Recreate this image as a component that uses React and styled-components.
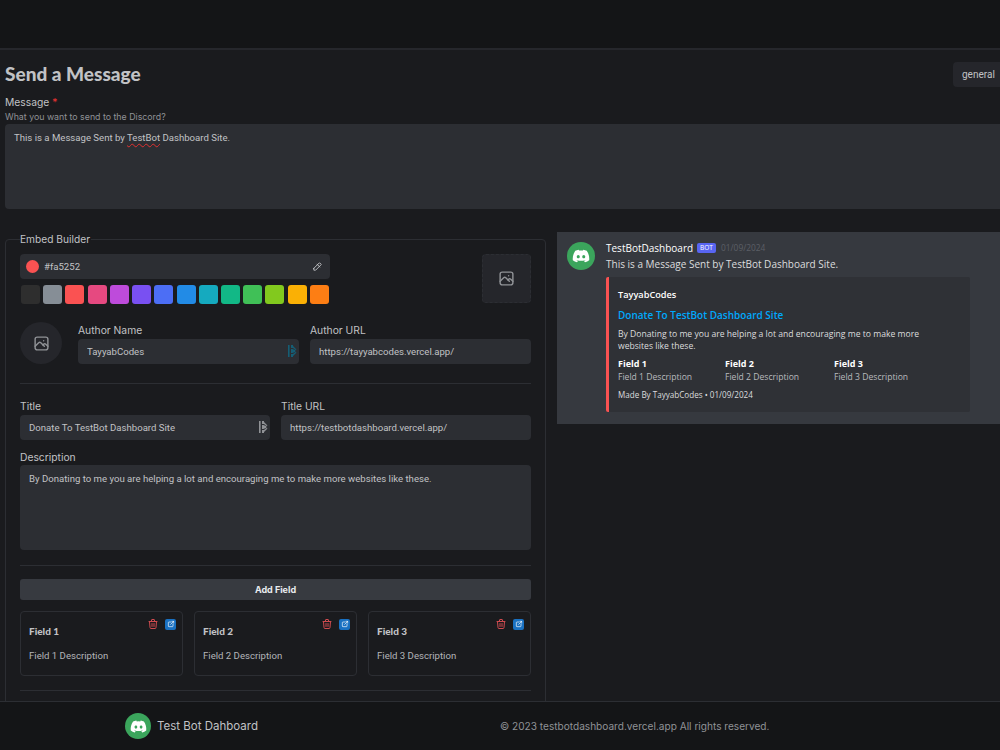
import React from 'react'
import styled, { createGlobalStyle } from 'styled-components'
import { FaDiscord } from 'react-icons/fa'
import { TbColorPicker, TbPhoto, TbTrash, TbExternalLink } from 'react-icons/tb'

const GlobalStyle = createGlobalStyle`
  html, body { margin: 0; padding: 0; background: #1a1b1e; }
  * { box-sizing: border-box; }
  body { font-family: "Roboto", sans-serif; color: #c1c2c5; }
`

const Shell = styled.div`
  height: 750px;
  display: flex;
  flex-direction: column;
  overflow: hidden;
`

const Header = styled.header`
  flex: 0 0 50px;
  background: #141517;
  border-bottom: 2px solid #26272c;
`

const Main = styled.main`
  flex: 1;
  min-height: 0;
  overflow: hidden;
  padding: 10px 0 0 5px;
`

const TitleRow = styled.div`
  display: flex;
  justify-content: space-between;
  align-items: center;
  height: 28px;
`

const PageTitle = styled.h1`
  margin: 0;
  font-family: "Lato", sans-serif;
  font-size: 19px;
  line-height: 28px;
  font-weight: 900;
  color: #c1c2c5;
`

const ChannelButton = styled.div`
  width: 47px;
  height: 25px;
  line-height: 25px;
  padding-left: 9px;
  background: #25262b;
  border-radius: 4px 0 0 4px;
  font-size: 10px;
  color: #c1c2c5;
  white-space: nowrap;
`

const Label = styled.label`
  display: block;
  font-family: "Inter", sans-serif;
  font-size: 10.3px;
  font-weight: 400;
  line-height: 16px;
  color: #c1c2c5;
`

const MessageLabel = styled(Label)`
  margin-top: 6px;
`

const Required = styled.span`
  color: #e03131;
`

const Hint = styled.div`
  margin-top: 1px;
  font-family: "Inter", sans-serif;
  font-size: 8.8px;
  line-height: 11px;
  color: #909296;
`

const MessageBox = styled.div`
  height: 85px;
  margin-top: 2px;
  padding: 6px 9px;
  background: #2c2e33;
  border-radius: 4px 0 0 4px;
  font-size: 9.6px;
  line-height: 15px;
  color: #c1c2c5;
`

const Misspelled = styled.span`
  text-decoration: underline wavy #e03131 1px;
  text-underline-offset: 2px;
`

const Columns = styled.div`
  display: grid;
  grid-template-columns: 541px 443px;
  gap: 11px;
  margin-top: 23px;
  align-items: start;
`

const Fieldset = styled.fieldset`
  margin: 0;
  padding: 8px 14px 14px;
  min-width: 0;
  border: 1px solid #2c2e33;
  border-radius: 4px;
`

const Legend = styled.legend`
  padding: 0 1px 0 0;
  font-family: "Inter", sans-serif;
  font-size: 10.2px;
  font-weight: 400;
  line-height: 14px;
  color: #c1c2c5;
`

const ColorRow = styled.div`
  display: flex;
  justify-content: space-between;
  align-items: flex-start;
`

const ColorInput = styled.div`
  width: 310px;
  height: 25px;
  display: flex;
  align-items: center;
  gap: 5px;
  padding: 0 7px 0 6px;
  background: #2c2e33;
  border-radius: 4px;
  font-size: 9.6px;
`

const ColorDot = styled.span`
  flex: none;
  width: 13px;
  height: 13px;
  border-radius: 50%;
  background: ${p => p.$color};
`

const ColorValue = styled.span`
  flex: 1;
`

const Swatches = styled.div`
  display: flex;
  gap: 3.23px;
  margin: 6px 0 0 1px;
`

const Swatch = styled.span`
  width: 19px;
  height: 19px;
  border-radius: 3px;
  background: ${p => p.$color};
`

const ImageBox = styled.div`
  width: 49px;
  height: 49px;
  display: flex;
  align-items: center;
  justify-content: center;
  background: #25262b;
  border: 1px dashed #2c2e33;
  border-radius: 4px;
  color: #909296;
`

const AuthorRow = styled.div`
  display: flex;
  gap: 16px;
  margin-top: 18px;
  align-items: flex-end;
`

const AuthorCircle = styled(ImageBox)`
  flex: none;
  width: 42px;
  height: 42px;
  border: none;
  border-radius: 50%;
`

const TwoFields = styled.div`
  flex: 1;
  display: grid;
  grid-template-columns: 1fr 1fr;
  column-gap: 11px;
`

const Field = styled.div`
  min-width: 0;
`

const InputWrap = styled.div`
  position: relative;
  height: 25px;
  margin-top: 1px;
`

const Input = styled.input`
  width: 100%;
  height: 100%;
  padding: 0 9px;
  border: none;
  outline: none;
  background: #2c2e33;
  border-radius: 4px;
  font-family: "Roboto", sans-serif;
  font-size: 9.6px;
  color: #c1c2c5;
`

const GrammarMark = styled.svg`
  position: absolute;
  right: 2px;
  top: 6px;
  color: ${p => p.$color};
`

const Divider = styled.hr`
  margin: ${p => p.$margin || '14px 0'};
  border: none;
  border-top: 1px solid #2c2e33;
`

const DescriptionField = styled.div`
  margin-top: 9px;
`

const DescriptionArea = styled.textarea`
  display: block;
  width: 100%;
  height: 85px;
  padding: 6px 9px;
  border: none;
  outline: none;
  resize: none;
  background: #2c2e33;
  border-radius: 4px;
  font-family: "Roboto", sans-serif;
  font-size: 9.6px;
  line-height: 15px;
  color: #c1c2c5;
`

const AddButton = styled.button`
  display: block;
  width: 100%;
  height: 21px;
  padding: 0;
  border: none;
  background: #373a40;
  border-radius: 3px;
  font-family: "Inter", sans-serif;
  font-size: 9px;
  font-weight: 700;
  color: #e9ecef;
`

const FieldCards = styled.div`
  display: grid;
  grid-template-columns: repeat(3, 1fr);
  gap: 11px;
  margin-top: 11px;
`

const FieldCard = styled.div`
  position: relative;
  height: 65px;
  padding: 12px 8px;
  border: 1px solid #2c2e33;
  border-radius: 4px;
`

const FieldName = styled.div`
  font-family: "Lato", sans-serif;
  font-size: 10px;
  font-weight: 900;
  line-height: 14px;
  color: #c1c2c5;
`

const FieldDescription = styled.div`
  margin-top: 11px;
  font-size: 9.6px;
  line-height: 14px;
  color: #b4b5b9;
`

const CardActions = styled.div`
  position: absolute;
  top: 6px;
  right: 6px;
  display: flex;
  align-items: center;
  gap: 6px;
  color: #cf4b4f;
`

const MoveButton = styled.span`
  width: 11px;
  height: 11px;
  display: flex;
  align-items: center;
  justify-content: center;
  background: #1971c2;
  border-radius: 2px;
  color: #fff;
`

const Preview = styled.section`
  height: 192px;
  padding: 10px 10px 0;
  display: flex;
  gap: 11px;
  background: #36393f;
  font-family: "Open Sans", sans-serif;
`

const Avatar = styled.div`
  flex: none;
  width: ${p => p.$size}px;
  height: ${p => p.$size}px;
  display: flex;
  align-items: center;
  justify-content: center;
  background: #3ba55c;
  border-radius: 50%;
  color: #fff;
`

const PreviewBody = styled.div`
  flex: 1;
  min-width: 0;
`

const MetaRow = styled.div`
  display: flex;
  align-items: center;
  height: 13px;
  margin-top: -1px;
`

const BotName = styled.span`
  font-size: 10px;
  font-weight: 500;
  color: #fff;
`

const BotBadge = styled.span`
  margin-left: 4px;
  padding: 0 3px;
  height: 10px;
  line-height: 10px;
  background: #5865f2;
  border-radius: 2px;
  font-size: 6.5px;
  font-weight: 500;
  color: #fff;
`

const BotDate = styled.span`
  margin-left: 5px;
  font-size: 8.4px;
  color: #5c5f66;
`

const PreviewText = styled.div`
  margin-top: 3px;
  font-size: 10px;
  line-height: 14px;
  color: #dcddde;
`

const Embed = styled.div`
  width: 364px;
  height: 135px;
  margin-top: 6px;
  padding: 12px 9px;
  background: #2f3136;
  border-left: 3px solid ${p => p.$color};
  border-radius: 2px;
`

const EmbedAuthor = styled.div`
  font-size: 9.2px;
  font-weight: 600;
  line-height: 12px;
  color: #fff;
`

const EmbedTitle = styled.div`
  margin-top: 7px;
  font-size: 10px;
  font-weight: 600;
  line-height: 14px;
  color: #00a8fc;
`

const EmbedText = styled.div`
  max-width: 320px;
  margin-top: 6px;
  font-size: 8.6px;
  line-height: 12px;
  color: #dcddde;
`

const EmbedFields = styled.div`
  display: grid;
  grid-template-columns: 107px 109px 1fr;
  margin-top: 5px;
`

const EmbedFieldName = styled.div`
  font-size: 9px;
  font-weight: 700;
  line-height: 13px;
  color: #fff;
`

const EmbedFieldValue = styled.div`
  margin-top: 1px;
  font-size: 8.6px;
  line-height: 13px;
  color: #b9bbbe;
`

const EmbedFooter = styled.div`
  margin-top: 5px;
  font-size: 8.1px;
  font-weight: 500;
  line-height: 12px;
  color: #dcddde;
`

const Footer = styled.footer`
  flex: 0 0 49px;
  display: flex;
  align-items: center;
  padding-left: 125px;
  background: #141517;
  border-top: 1px solid #2c2e33;
`

const Brand = styled.div`
  width: 375px;
  display: flex;
  align-items: center;
  gap: 6px;
  font-family: "Inter", sans-serif;
  font-size: 11.5px;
  color: #c1c2c5;
`

const Copyright = styled.div`
  font-family: "Inter", sans-serif;
  font-size: 10.1px;
  color: #909296;
`

const swatchColors = [
  '#2e2e2e', '#868e96', '#fa5252', '#e64980', '#be4bdb', '#7950f2', '#4c6ef5',
  '#228be6', '#15aabf', '#12b886', '#40c057', '#82c91e', '#fab005', '#fd7e14',
]

const fields = [
  { name: 'Field 1', description: 'Field 1 Description' },
  { name: 'Field 2', description: 'Field 2 Description' },
  { name: 'Field 3', description: 'Field 3 Description' },
]

const description = 'By Donating to me you are helping a lot and encouraging me to make more websites like these.'

// the small extension mark that sits at the end of some inputs
const Mark = ({ color }) => (
  <GrammarMark $color={color} width="9" height="12" viewBox="0 0 9 12" fill="currentColor">
    <path d="M0 0h1.6v12H0zM3 0h2v3H3zM3 9h2v3H3zM3 4h1.4l3 1.2v1.6L4.400 8H3zM5 1l3.500 3.500-1 .5L5 3zM5 11l3.500-3.500-1-.5L5 9z" />
  </GrammarMark>
)

const TextField = ({ label, value, mark }) => (
  <Field>
    <Label>{label}</Label>
    <InputWrap>
      <Input readOnly value={value} />
      {mark && <Mark color={mark} />}
    </InputWrap>
  </Field>
)

export default function App() {
  return (
    <Shell>
      <GlobalStyle />
      <Header />
      <Main>
        <TitleRow>
          <PageTitle>Send a Message</PageTitle>
          <ChannelButton>general</ChannelButton>
        </TitleRow>
        <MessageLabel>Message <Required>*</Required></MessageLabel>
        <Hint>What you want to send to the Discord?</Hint>
        <MessageBox>This is a Message Sent by <Misspelled>TestBot</Misspelled> Dashboard Site.</MessageBox>

        <Columns>
          <Fieldset>
            <Legend>Embed Builder</Legend>
            <ColorRow>
              <div>
                <ColorInput>
                  <ColorDot $color="#fa5252" />
                  <ColorValue>#fa5252</ColorValue>
                  <TbColorPicker size={11} />
                </ColorInput>
                <Swatches>
                  {swatchColors.map(c => <Swatch key={c} $color={c} />)}
                </Swatches>
              </div>
              <ImageBox><TbPhoto size={17} /></ImageBox>
            </ColorRow>

            <AuthorRow>
              <AuthorCircle><TbPhoto size={17} /></AuthorCircle>
              <TwoFields>
                <TextField label="Author Name" value="TayyabCodes" mark="#155e75" />
                <TextField label="Author URL" value="https://tayyabcodes.vercel.app/" />
              </TwoFields>
            </AuthorRow>

            <Divider $margin="19px 0 14px" />

            <TwoFields>
              <TextField label="Title" value="Donate To TestBot Dashboard Site" mark="#909296" />
              <TextField label="Title URL" value="https://testbotdashboard.vercel.app/" />
            </TwoFields>

            <DescriptionField>
              <Label>Description</Label>
              <DescriptionArea readOnly value={description} />
            </DescriptionField>

            <Divider $margin="15px 0 13px" />

            <AddButton>Add Field</AddButton>

            <FieldCards>
              {fields.map(f => (
                <FieldCard key={f.name}>
                  <CardActions>
                    <TbTrash size={12} />
                    <MoveButton><TbExternalLink size={8} /></MoveButton>
                  </CardActions>
                  <FieldName>{f.name}</FieldName>
                  <FieldDescription>{f.description}</FieldDescription>
                </FieldCard>
              ))}
            </FieldCards>

            <Divider $margin="14px 0" />
          </Fieldset>

          <Preview>
            <Avatar $size={28}><FaDiscord size={18} /></Avatar>
            <PreviewBody>
              <MetaRow>
                <BotName>TestBotDashboard</BotName>
                <BotBadge>BOT</BotBadge>
                <BotDate>01/09/2024</BotDate>
              </MetaRow>
              <PreviewText>This is a Message Sent by TestBot Dashboard Site.</PreviewText>
              <Embed $color="#fa5252">
                <EmbedAuthor>TayyabCodes</EmbedAuthor>
                <EmbedTitle>Donate To TestBot Dashboard Site</EmbedTitle>
                <EmbedText>{description}</EmbedText>
                <EmbedFields>
                  {fields.map(f => (
                    <div key={f.name}>
                      <EmbedFieldName>{f.name}</EmbedFieldName>
                      <EmbedFieldValue>{f.description}</EmbedFieldValue>
                    </div>
                  ))}
                </EmbedFields>
                <EmbedFooter>Made By TayyabCodes • 01/09/2024</EmbedFooter>
              </Embed>
            </PreviewBody>
          </Preview>
        </Columns>
      </Main>
      <Footer>
        <Brand>
          <Avatar $size={26}><FaDiscord size={17} /></Avatar>
          Test Bot Dahboard
        </Brand>
        <Copyright>© 2023 testbotdashboard.vercel.app All rights reserved.</Copyright>
      </Footer>
    </Shell>
  )
}
